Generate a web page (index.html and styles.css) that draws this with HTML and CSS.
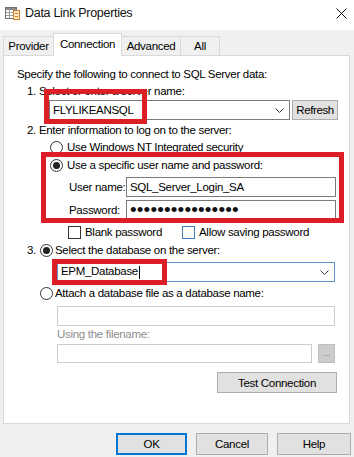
FILE: index.html
```html
<!DOCTYPE html>
<html>
<head>
<meta charset="utf-8">
<link rel="stylesheet" href="styles.css">
</head>
<body>
<div class="dialog">
  <div class="titlebar">
    <svg class="app-icon" width="16" height="16" viewBox="0 0 16 16">
      <rect x="0.5" y="2.5" width="11" height="11" fill="#fff" stroke="#707070"/>
      <rect x="1" y="3" width="10" height="2" fill="#8a8a8a"/>
      <line x1="1" y1="7.5" x2="11" y2="7.5" stroke="#a0a0a0"/>
      <line x1="1" y1="10.5" x2="11" y2="10.5" stroke="#a0a0a0"/>
      <line x1="4.5" y1="5" x2="4.5" y2="13" stroke="#a0a0a0"/>
      <rect x="8.5" y="5.5" width="6" height="9" fill="#fbe7c4" stroke="#c8802c"/>
      <line x1="10" y1="8.5" x2="13" y2="8.5" stroke="#c8802c"/>
      <line x1="10" y1="11.5" x2="13" y2="11.5" stroke="#c8802c"/>
    </svg>
    <span class="title">Data Link Properties</span>
    <svg class="close" width="11" height="11" viewBox="0 0 11 11">
      <path d="M0.5 0.5 L10.5 10.5 M10.5 0.5 L0.5 10.5" stroke="#111" stroke-width="1"/>
    </svg>
  </div>
  <div class="client">
    <div class="tabs">
      <div class="tab t-provider">Provider</div>
      <div class="tab t-conn active">Connection</div>
      <div class="tab t-adv">Advanced</div>
      <div class="tab t-all">All</div>
    </div>
    <div class="panel">
      <div class="line r1">Specify the following to connect to SQL Server data:</div>
      <div class="line r2">1. Select or enter a server name:</div>
      <div class="row r3">
        <div class="combo server"><span class="val">FLYLIKEANSQL</span>
          <svg class="chev" width="9" height="5" viewBox="0 0 9 5"><polyline points="0.5,0.5 4.5,4.5 8.5,0.5" fill="none" stroke="#333"/></svg>
        </div>
        <div class="btn refresh">Refresh</div>
      </div>
      <div class="line r4">2. Enter information to log on to the server:</div>
      <div class="line r5"><span class="radio"></span><span class="rtext">Use Windows NT Integrated security</span></div>
      <div class="line r6"><span class="radio on"></span><span class="rtext">Use a specific user name and password:</span></div>
      <div class="row r7"><span class="flabel">User name:</span><div class="input field">SQL_Server_Login_SA</div></div>
      <div class="row r8"><span class="flabel">Password:</span><div class="input field"><span class="dots">&#8226;&#8226;&#8226;&#8226;&#8226;&#8226;&#8226;&#8226;&#8226;&#8226;&#8226;&#8226;&#8226;&#8226;&#8226;&#8226;</span></div></div>
      <div class="line r9">
        <span class="check c1"><span class="box"></span><span class="ctext">Blank password</span></span>
        <span class="check"><span class="box blue"></span><span class="ctext">Allow saving password</span></span>
      </div>
      <div class="line r10"><span class="num">3.</span><span class="radio on"></span><span class="rtext2">Select the database on the server:</span></div>
      <div class="row r11">
        <div class="combo db"><span class="val">EPM_Database<span class="caret"></span></span>
          <svg class="chev" width="9" height="5" viewBox="0 0 9 5"><polyline points="0.5,0.5 4.5,4.5 8.5,0.5" fill="none" stroke="#333"/></svg>
        </div>
      </div>
      <div class="line r12"><span class="radio"></span><span class="rtext2">Attach a database file as a database name:</span></div>
      <div class="row r13"><div class="input dis wide"></div></div>
      <div class="line r14 grey">Using the filename:</div>
      <div class="row r15"><div class="input dis file"></div><div class="btn browse">...</div></div>
      <div class="row r16"><div class="btn test">Test Connection</div></div>
    </div>
    <div class="buttons">
      <div class="btn ok">OK</div>
      <div class="btn cancel">Cancel</div>
      <div class="btn help">Help</div>
    </div>
  </div>
  <div class="mark m1"></div>
  <div class="mark m2"></div>
  <div class="mark m3"></div>
</div>
</body>
</html>
```
FILE: styles.css
```css
* { box-sizing: border-box; }
body {
  margin: 0;
  font-family: "Liberation Sans", Arial, sans-serif;
  font-size: 11.5px;
  letter-spacing: -0.3px;
  color: #000;
}
.dialog {
  position: relative;
  width: 354px;
  height: 457px;
  background: #f0f0f0;
  overflow: hidden;
}
.titlebar {
  height: 30px;
  background: #fff;
  display: flex;
  align-items: center;
  padding-left: 5px;
}
.app-icon { margin-top: -4px; flex-shrink: 0; }
.title { margin-left: 4px; font-size: 12.5px; margin-top: -4px; color: #111; }
.close { margin-left: auto; margin-right: 7px; margin-top: -4px; }

.client { padding: 0 4px 0 3px; }
.tabs {
  display: flex;
  align-items: flex-end;
  height: 25px;
  position: relative;
  z-index: 1;
}
.tab {
  height: 19px;
  border: 1px solid #d9d9d9;
  border-bottom: none;
  background: #f0f0f0;
  display: flex;
  align-items: center;
  justify-content: center;
  flex-shrink: 0;
}
.t-provider { width: 51px; }
.t-conn { width: 69px; }
.t-adv { width: 60px; margin-left: -1px; }
.t-all { width: 40px; margin-left: -1px; }
.tab.active {
  height: 23px;
  margin-bottom: -1px;
  margin-left: -1px;
  background: #fff;
  padding-bottom: 3px;
}
.panel {
  width: 347px;
  height: 369px;
  background: #fff;
  border: 1px solid #d9d9d9;
  padding-top: 11px;
}
.line {
  height: 14px;
  line-height: 14px;
  display: flex;
  align-items: center;
  white-space: nowrap;
}
.row { display: flex; align-items: center; }
.r1 { padding-left: 13px; }
.r2 { margin-top: 3px; padding-left: 23px; }
.r3 { margin-top: 2px; height: 20px; padding-left: 45px; }
.r4 { margin-top: 3px; padding-left: 23px; }
.r5 { margin-top: 3px; padding-left: 46px; }
.r6 { margin-top: 4px; padding-left: 46px; }
.r7 { margin-top: 5px; height: 20px; padding-left: 65px; }
.r8 { margin-top: 3px; height: 20px; padding-left: 65px; }
.r9 { margin-top: 5px; padding-left: 64px; }
.r10 { margin-top: 4px; padding-left: 23px; }
.r11 { margin-top: 5px; height: 20px; padding-left: 53px; }
.r12 { margin-top: 4px; padding-left: 36px; }
.r13 { margin-top: 6px; height: 20px; padding-left: 53px; }
.r14 { margin-top: 1px; padding-left: 53px; }
.r15 { margin-top: 3px; height: 19px; padding-left: 53px; }
.r16 { margin-top: 9px; height: 21px; padding-left: 213px; }
.grey { color: #8d8d8d; }

.combo, .input {
  height: 100%;
  border: 1px solid #7a7a7a;
  background: #fff;
  display: flex;
  align-items: center;
  padding-left: 3px;
  flex-shrink: 0;
}
.combo.server { width: 241px; }
.combo.db { width: 278px; border-color: #5d94cc; }
.chev { margin-left: auto; margin-right: 5px; }
.caret {
  display: inline-block;
  width: 1px;
  height: 13px;
  background: #000;
  vertical-align: middle;
  margin-left: 1px;
}
.field { width: 210px; }
.input.dis { border-color: #cccccc; }
.wide { width: 278px; }
.file { width: 255px; }
.flabel { width: 57px; flex-shrink: 0; }
.dots { font-size: 19px; letter-spacing: 0.15px; line-height: 14px; color: #111; }

.btn {
  background: #e1e1e1;
  border: 1px solid #adadad;
  display: flex;
  align-items: center;
  justify-content: center;
  height: 100%;
  flex-shrink: 0;
}
.refresh { width: 46px; margin-left: 2px; letter-spacing: -0.4px; }
.browse {
  width: 17px;
  margin-left: 6px;
  background: #cccccc;
  border-color: #bfbfbf;
  color: #838383;
  font-size: 9px;
  align-items: flex-end;
  padding-bottom: 4px;
}
.test { width: 120px; }

.radio {
  width: 13px;
  height: 13px;
  border: 1px solid #333;
  border-radius: 50%;
  background: #fff;
  flex-shrink: 0;
  display: flex;
  align-items: center;
  justify-content: center;
}
.radio.on::after {
  content: "";
  width: 7px;
  height: 7px;
  border-radius: 50%;
  background: #222;
}
.rtext { margin-left: 4px; }
.rtext2 { margin-left: 2px; }
.num { width: 13px; flex-shrink: 0; }
.check { display: flex; align-items: center; }
.check.c1 { width: 114px; }
.box {
  width: 13px;
  height: 13px;
  border: 1px solid #333;
  background: #fff;
  flex-shrink: 0;
}
.box.blue { border-color: #3f80b9; }
.ctext { margin-left: 4px; }

.buttons {
  display: flex;
  margin-top: 9px;
  height: 22px;
  padding-left: 113px;
  gap: 9px;
}
.ok { width: 71px; border: 2px solid #0078d7; }
.cancel { width: 72px; }
.help { width: 74px; }

.mark {
  position: absolute;
  border: 5px solid #dc1e27;
}
.m1 { left: 44px; top: 89px; width: 103px; height: 35px; }
.m2 { left: 41px; top: 152px; width: 303px; height: 71px; }
.m3 { left: 52px; top: 259px; width: 115px; height: 26px; }
```
